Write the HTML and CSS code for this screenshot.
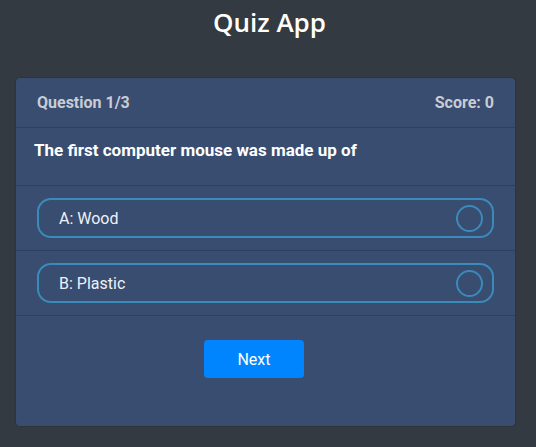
FILE: index.html
```html
<!DOCTYPE html>
<html lang="en">
<head>
    <meta charset="UTF-8">
    <meta name="viewport" content="width=device-width, initial-scale=1.0">
    <title>Quiz App</title>
    <link rel="stylesheet" href="styles.css">
</head>
<body>
    <h1 class="title">Quiz App</h1>
    <div class="card">
        <div class="card-header">
            <span>Question 1/3</span>
            <span>Score: 0</span>
        </div>
        <div class="question">The first computer mouse was made up of</div>
        <div class="option-row">
            <div class="option">
                <span>A: Wood</span>
                <span class="radio"></span>
            </div>
        </div>
        <div class="option-row">
            <div class="option">
                <span>B: Plastic</span>
                <span class="radio"></span>
            </div>
        </div>
        <div class="card-footer">
            <button class="next-btn">Next</button>
        </div>
    </div>
</body>
</html>
```

FILE: styles.css
```css
body {
    margin: 0;
    padding: 0 21px 0 16px;
    background: #343a41;
    font-family: 'Roboto', sans-serif;
    color: #fff;
    height: 447px;
    overflow: hidden;
}

.title {
    font-family: 'Open Sans', sans-serif;
    font-weight: 600;
    font-size: 26px;
    text-align: center;
    margin: 0;
    padding: 4px 0 0 8px;
    height: 74px;
    line-height: 37px;
}

.card {
    background: #384d70;
    border-radius: 4px;
    height: 348px;
    box-shadow: 0 0 2px rgba(0, 0, 0, 0.3);
}

.card-header {
    display: flex;
    justify-content: space-between;
    align-items: center;
    height: 49px;
    padding: 0 21px;
    border-bottom: 1px solid #2f405e;
    font-weight: 700;
    font-size: 16px;
    color: #c9ccd4;
}

.question {
    height: 58px;
    padding: 12px 18px 0;
    box-sizing: border-box;
    border-bottom: 1px solid #2f405e;
    font-weight: 700;
    font-size: 17px;
    line-height: 20px;
}

.option-row {
    padding: 12px 21px;
    border-bottom: 1px solid #2f405e;
}

.option {
    display: flex;
    justify-content: space-between;
    align-items: center;
    height: 40px;
    box-sizing: border-box;
    border: 2px solid #3a8bbb;
    border-radius: 14px;
    padding: 0 9px 0 20px;
    font-size: 16px;
    color: #eef2f8;
}

.radio {
    width: 23px;
    height: 23px;
    border: 2px solid #3a8bbb;
    border-radius: 50%;
}

.card-footer {
    display: flex;
    justify-content: center;
    padding: 24px 23px 0 0;
}

.next-btn {
    width: 100px;
    height: 38px;
    border: none;
    border-radius: 4px;
    background: #0085ff;
    color: #fff;
    font-family: 'Roboto', sans-serif;
    font-size: 16px;
}
```
